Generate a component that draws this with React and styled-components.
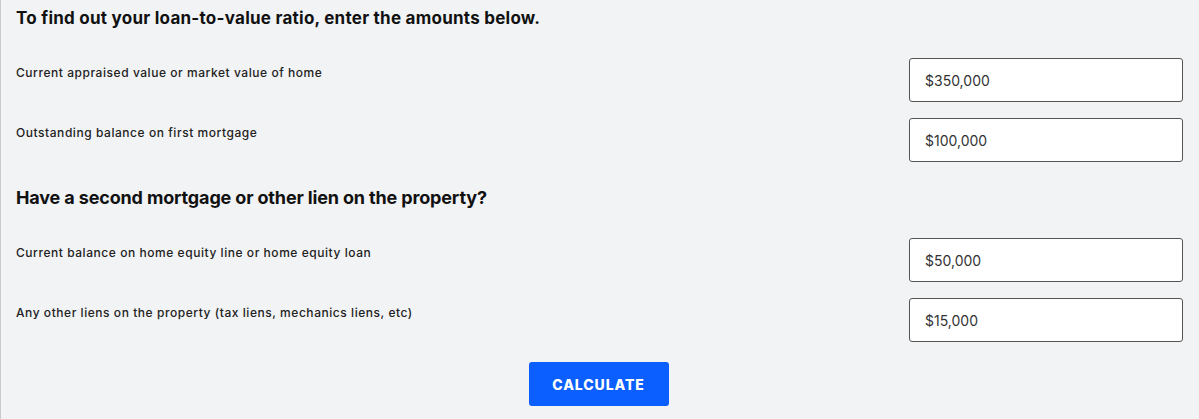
import React from "react";
import styled, { createGlobalStyle } from "styled-components";

const Global = createGlobalStyle`
  html, body { margin: 0; padding: 0; background: #f2f3f5; }
  body { font-family: Inter, "Noto Sans", sans-serif; color: #111; }
  * { box-sizing: border-box; }
`;

const Page = styled.div`
  min-height: 419px;
  background: #f2f3f5;
  border-left: 1px solid #c9cace;
  padding: 7px 16px 13px 15px;
  display: flex;
  flex-direction: column;
`;

const Heading = styled.h2`
  margin: ${(p) => p.$mt || 0}px 0 ${(p) => p.$mb || 0}px;
  font-size: ${(p) => p.$size}px;
  line-height: ${(p) => p.$lh}px;
  font-weight: 700;
  color: #111;
  letter-spacing: ${(p) => p.$ls}px;
`;

const Rows = styled.div`
  display: flex;
  flex-direction: column;
  gap: 16px;
`;

const Row = styled.div`
  display: flex;
  justify-content: space-between;
  align-items: flex-start;
`;

const Label = styled.label`
  padding-top: 8px;
  font-size: 12px;
  line-height: 14px;
  font-weight: 500;
  letter-spacing: 0.55px;
  color: #222;
`;

const Input = styled.input`
  width: 274px;
  height: 44px;
  border: 1px solid #555;
  border-radius: 3px;
  background: #fff;
  padding: 0 15px;
  font-family: Inter, "Noto Sans", sans-serif;
  font-size: 14px;
  color: #333;
  outline: none;
`;

const Button = styled.button`
  align-self: center;
  margin-top: 20px;
  margin-left: -2px;
  width: 140px;
  height: 44px;
  border: none;
  border-radius: 3px;
  background: #0b5fff;
  color: #fff;
  font-family: Inter, "Noto Sans", sans-serif;
  font-weight: 800;
  font-size: 14px;
  letter-spacing: 0.9px;
  cursor: pointer;
`;

const Field = ({ label, value }) => (
  <Row>
    <Label>{label}</Label>
    <Input defaultValue={value} />
  </Row>
);

export default function App() {
  return (
    <>
      <Global />
      <Page>
        <Heading $size={17} $lh={22} $mb={29} $ls={0.25}>
          To find out your loan-to-value ratio, enter the amounts below.
        </Heading>
        <Rows>
          <Field label="Current appraised value or market value of home" value="$350,000" />
          <Field label="Outstanding balance on first mortgage" value="$100,000" />
        </Rows>
        <Heading $size={18} $lh={24} $mt={24} $mb={28} $ls={-0.15}>
          Have a second mortgage or other lien on the property?
        </Heading>
        <Rows>
          <Field label="Current balance on home equity line or home equity loan" value="$50,000" />
          <Field label="Any other liens on the property (tax liens, mechanics liens, etc)" value="$15,000" />
        </Rows>
        <Button>CALCULATE</Button>
      </Page>
    </>
  );
}
